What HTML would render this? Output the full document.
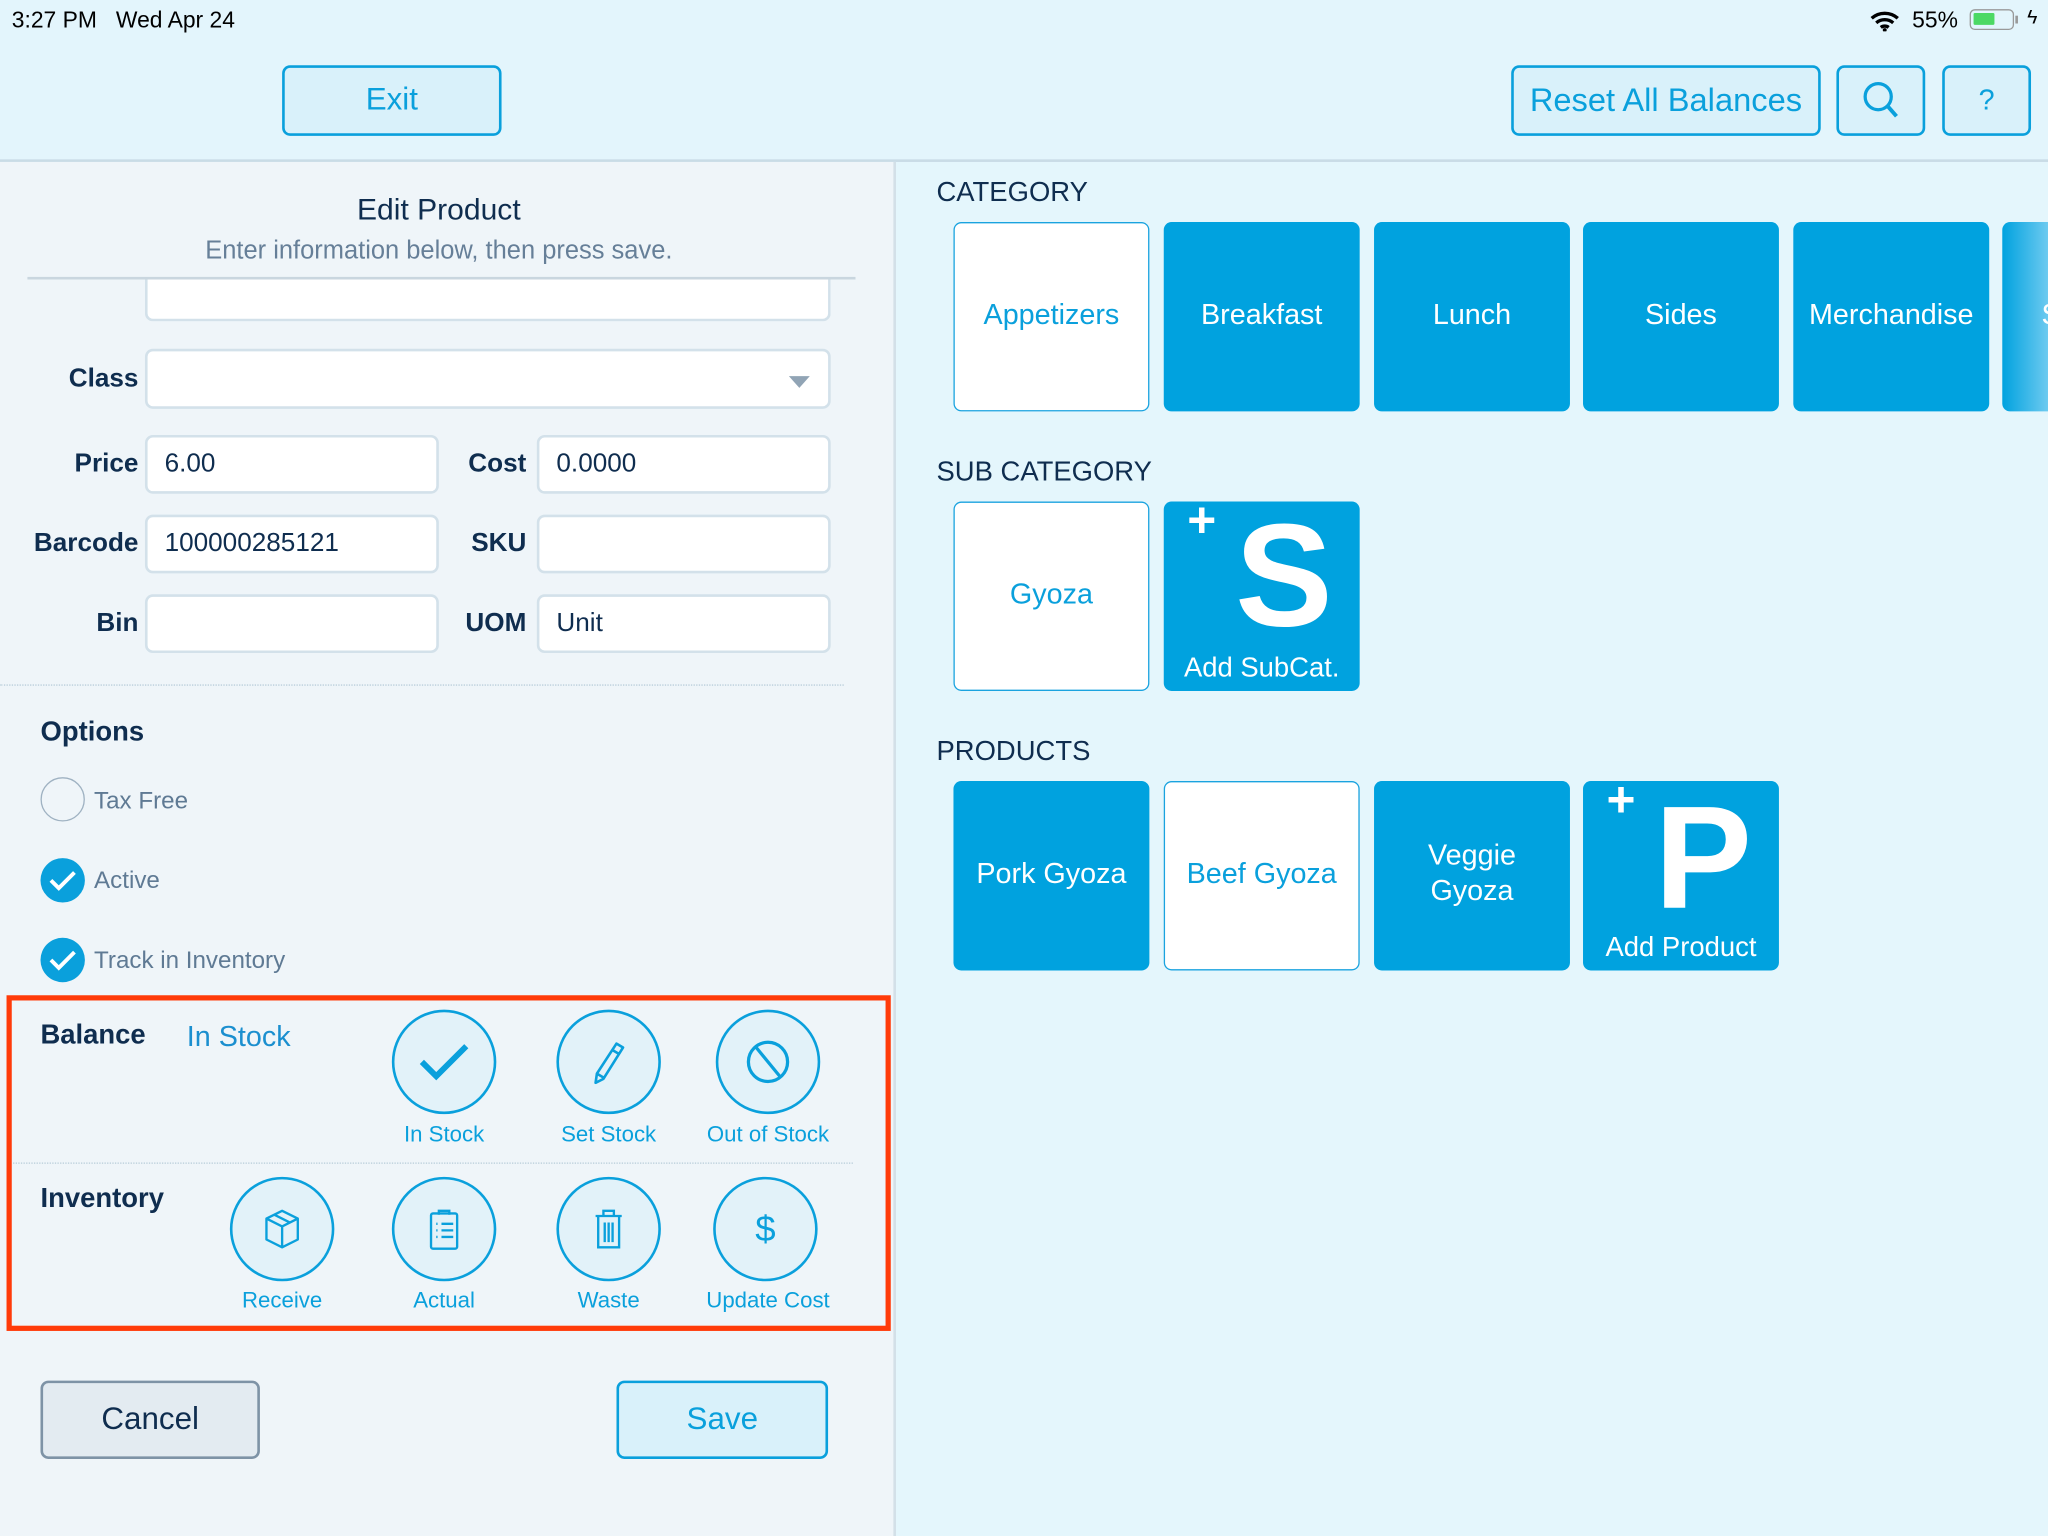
<!DOCTYPE html>
<html><head><meta charset="utf-8"><style>
html,body{margin:0;padding:0;width:2048px;height:1536px;overflow:hidden;background:#e4f6fc}
#w{position:absolute;left:0;top:0;width:1568px;height:1176px;transform:scale(1.306122);transform-origin:0 0;font-family:"Liberation Sans",sans-serif;color:#0f2d4f}
.a{position:absolute}
.btn{position:absolute;border:2px solid #0aa0dc;border-radius:6px;background:#d9f1fa;color:#0aa0dc;display:flex;align-items:center;justify-content:center;box-sizing:border-box}
.inp{position:absolute;background:#fff;border:2px solid #d3e1ea;border-radius:6px;box-sizing:border-box;font-size:20px;padding-left:13px;display:flex;align-items:center;color:#0f2d4f}
.lab{position:absolute;font-weight:bold;font-size:20px;text-align:right;width:100px}
.tile{position:absolute;width:150px;height:145px;border-radius:6px;box-sizing:border-box;display:flex;align-items:center;justify-content:center;text-align:center;font-size:22px;line-height:27px;padding-bottom:5px}
.b{background:#00a2df;color:#fff}
.w{background:#fff;border:1px solid #1aa3df;color:#0aa0dc}
.sec{position:absolute;font-size:21px;color:#0f2d4f}
.circ{position:absolute;width:80px;height:80px;border:2.5px solid #0aa0dc;border-radius:50%;background:#e2f2f9;box-sizing:border-box;display:flex;align-items:center;justify-content:center}
.cl{position:absolute;width:140px;text-align:center;font-size:17px;color:#0aa0dc}
.chk{position:absolute;width:34px;height:34px;border-radius:50%;background:#0aa0dc;display:flex;align-items:center;justify-content:center}
.opt{position:absolute;left:72px;font-size:18.5px;color:#5f7a94}
</style></head><body><div id="w">
<div class="a" style="left:0;top:0;width:1568px;height:122px;background:#e3f5fc;border-bottom:2px solid #c9dce6"></div>
<div class="a" style="left:9px;top:5px;font-size:17.5px;color:#000">3:27 PM&nbsp;&nbsp;&nbsp;Wed Apr 24</div>
<svg class="a" style="left:1431px;top:8px" width="24" height="16" viewBox="0 0 24 16"><path d="M2 6a15 15 0 0 1 20 0M5.5 9.5a10 10 0 0 1 13 0M9 13a5 5 0 0 1 6 0" stroke="#000" stroke-width="2.6" fill="none"/><circle cx="12" cy="15" r="1.5"/></svg>
<div class="a" style="left:1464px;top:5px;font-size:17.5px;color:#000">55%</div>
<div class="a" style="left:1508px;top:7px;width:34px;height:16px;border:1.5px solid #999;border-radius:4px;box-sizing:border-box"><div style="margin:2px;width:16px;height:9px;background:#4cd964;border-radius:1px"></div></div>
<div class="a" style="left:1543px;top:12px;width:2px;height:6px;background:#999"></div>
<div class="a" style="left:1552px;top:5px;font-size:15px;color:#000">ϟ</div>
<div class="btn" style="left:216px;top:50px;width:168px;height:54px;font-size:24px">Exit</div>
<div class="btn" style="left:1157px;top:50px;width:237px;height:54px;font-size:25px">Reset All Balances</div>
<div class="btn" style="left:1406px;top:50px;width:68px;height:54px"><svg width="28" height="30" viewBox="0 0 28 30"><circle cx="12" cy="12" r="10" stroke="#0aa0dc" stroke-width="2.5" fill="none"/><path d="M19 19l7 8" stroke="#0aa0dc" stroke-width="3"/></svg></div>
<div class="btn" style="left:1487px;top:50px;width:68px;height:54px;font-size:22px">?</div>
<div class="a" style="left:0;top:124px;width:684px;height:1052px;background:#eff5f9;border-right:2px solid #d3e0e8"></div>
<div class="a" style="left:0;top:147px;width:672px;text-align:center;font-size:23px">Edit Product</div>
<div class="a" style="left:0;top:181px;width:672px;text-align:center;font-size:19.5px;color:#667f98">Enter information below, then press save.</div>
<div class="a" style="left:21px;top:212px;width:634px;height:2px;background:#c9d6df"></div>
<div class="a" style="left:111px;top:214px;width:525px;height:32px;background:#fff;border:2px solid #d3e1ea;border-top:none;border-radius:0 0 6px 6px;box-sizing:border-box"></div>
<div class="lab" style="left:6px;top:279px">Class</div>
<div class="inp" style="left:111px;top:267px;width:525px;height:46px"><div style="position:absolute;right:14px;top:19px;border-left:8px solid transparent;border-right:8px solid transparent;border-top:9px solid #91a4b5"></div></div>
<div class="lab" style="left:6px;top:344px">Price</div>
<div class="inp" style="left:111px;top:333px;width:225px;height:45px">6.00</div>
<div class="lab" style="left:303px;top:344px">Cost</div>
<div class="inp" style="left:411px;top:333px;width:225px;height:45px">0.0000</div>
<div class="lab" style="left:6px;top:405px">Barcode</div>
<div class="inp" style="left:111px;top:394px;width:225px;height:45px">100000285121</div>
<div class="lab" style="left:303px;top:405px">SKU</div>
<div class="inp" style="left:411px;top:394px;width:225px;height:45px"></div>
<div class="lab" style="left:6px;top:466px">Bin</div>
<div class="inp" style="left:111px;top:455px;width:225px;height:45px"></div>
<div class="lab" style="left:303px;top:466px">UOM</div>
<div class="inp" style="left:411px;top:455px;width:225px;height:45px">Unit</div>
<div class="a" style="left:0;top:524px;width:646px;border-top:1.5px dotted #b6cbd8"></div>
<div class="a" style="left:31px;top:549px;font-size:21px;font-weight:bold">Options</div>
<div class="a" style="left:31px;top:595px;width:34px;height:34px;border:1.5px solid #9fb2c2;border-radius:50%;box-sizing:border-box"></div>
<div class="opt" style="top:602px">Tax Free</div>
<div class="chk" style="left:31px;top:657px"><svg width="22" height="18" viewBox="0 0 22 18"><path d="M2 9l6 6L20 3" stroke="#fff" stroke-width="3" fill="none"/></svg></div>
<div class="opt" style="top:663px">Active</div>
<div class="chk" style="left:31px;top:718px"><svg width="22" height="18" viewBox="0 0 22 18"><path d="M2 9l6 6L20 3" stroke="#fff" stroke-width="3" fill="none"/></svg></div>
<div class="opt" style="top:724px">Track in Inventory</div>
<div class="a" style="left:5px;top:762px;width:677px;height:257px;border:4px solid #ff3b0a;box-sizing:border-box"></div>
<div class="a" style="left:31px;top:781px;font-size:21px;font-weight:bold">Balance</div>
<div class="a" style="left:143px;top:781px;font-size:22px;color:#1b8fcf">In Stock</div>
<div class="circ" style="left:300px;top:773px"><svg width="40" height="30" viewBox="0 0 40 30"><path d="M3 15l11 11L37 3" stroke="#0aa0dc" stroke-width="4.5" fill="none"/></svg></div>
<div class="circ" style="left:426px;top:773px"><svg width="30" height="34" viewBox="0 0 30 34"><path d="M21 3l5 3-15 24-6 3 1-7z M18 8l5 3 M6 26l5 3" stroke="#0aa0dc" stroke-width="2" fill="none" stroke-linejoin="round"/></svg></div>
<div class="circ" style="left:548px;top:773px"><svg width="36" height="36" viewBox="0 0 36 36"><circle cx="18" cy="18" r="15" stroke="#0aa0dc" stroke-width="2.5" fill="none"/><path d="M9 7l18 22" stroke="#0aa0dc" stroke-width="2.5"/></svg></div>
<div class="cl" style="left:270px;top:859px">In Stock</div>
<div class="cl" style="left:396px;top:859px">Set Stock</div>
<div class="cl" style="left:518px;top:859px">Out of Stock</div>
<div class="a" style="left:10px;top:890px;width:643px;border-top:1.5px dotted #b6cbd8"></div>
<div class="a" style="left:31px;top:906px;font-size:21px;font-weight:bold">Inventory</div>
<div class="circ" style="left:176px;top:901px"><svg width="30" height="34" viewBox="0 0 30 34"><path d="M3 9l12-6 12 6v16l-12 6-12-6z M3 9l12 6 12-6 M15 15v16 M9 6l12 6" stroke="#0aa0dc" stroke-width="1.8" fill="none" stroke-linejoin="round"/></svg></div>
<div class="circ" style="left:300px;top:901px"><svg width="26" height="36" viewBox="0 0 26 36"><rect x="3" y="6" width="20" height="27" rx="1.5" stroke="#0aa0dc" stroke-width="1.8" fill="none"/><path d="M9 7V4h8v3 M7 14h1 M11 14h9 M7 19h1 M11 19h9 M7 24h1 M11 24h9" stroke="#0aa0dc" stroke-width="1.8" fill="none"/></svg></div>
<div class="circ" style="left:426px;top:901px"><svg width="26" height="36" viewBox="0 0 26 36"><path d="M3 8h20 M9 8V4h8v4 M5 8v24h16V8 M10 13v15 M13 13v15 M16 13v15" stroke="#0aa0dc" stroke-width="1.8" fill="none"/></svg></div>
<div class="circ" style="left:546px;top:901px;font-size:28px;color:#0aa0dc">$</div>
<div class="cl" style="left:146px;top:986px">Receive</div>
<div class="cl" style="left:270px;top:986px">Actual</div>
<div class="cl" style="left:396px;top:986px">Waste</div>
<div class="cl" style="left:518px;top:986px">Update Cost</div>
<div class="btn" style="left:31px;top:1057px;width:168px;height:60px;font-size:24px;background:#e3ebf1;border-color:#7e93a6;color:#0f2d4f">Cancel</div>
<div class="btn" style="left:472px;top:1057px;width:162px;height:60px;font-size:24px">Save</div>
<div class="sec" style="left:717px;top:136px">CATEGORY</div>
<div class="tile w" style="left:730px;top:170px">Appetizers</div>
<div class="tile b" style="left:891px;top:170px">Breakfast</div>
<div class="tile b" style="left:1052px;top:170px">Lunch</div>
<div class="tile b" style="left:1212px;top:170px">Sides</div>
<div class="tile b" style="left:1373px;top:170px">Merchandise</div>
<div class="tile" style="left:1533px;top:170px;width:35px;border-radius:6px 0 0 6px;background:linear-gradient(90deg,#00a2df,#6dcaf0);color:#fff;justify-content:flex-start;padding-left:30px;overflow:hidden">S</div>
<div class="sec" style="left:717px;top:350px">SUB CATEGORY</div>
<div class="tile w" style="left:730px;top:384px">Gyoza</div>
<div class="tile b" style="left:891px;top:384px;display:block">
 <div style="position:absolute;left:18px;top:2px;font-size:38px;font-weight:bold">+</div>
 <div style="position:absolute;left:0;width:150px;top:-2px;font-size:112px;line-height:118px;font-weight:bold;padding-left:34px;box-sizing:border-box;text-align:center">S</div>
 <div style="position:absolute;left:0;width:150px;top:114px;font-size:21px">Add SubCat.</div>
</div>
<div class="sec" style="left:717px;top:564px">PRODUCTS</div>
<div class="tile b" style="left:730px;top:598px">Pork Gyoza</div>
<div class="tile w" style="left:891px;top:598px">Beef Gyoza</div>
<div class="tile b" style="left:1052px;top:598px">Veggie<br>Gyoza</div>
<div class="tile b" style="left:1212px;top:598px;display:block">
 <div style="position:absolute;left:18px;top:2px;font-size:38px;font-weight:bold">+</div>
 <div style="position:absolute;left:0;width:150px;top:0;font-size:112px;line-height:118px;font-weight:bold;padding-left:34px;box-sizing:border-box;text-align:center">P</div>
 <div style="position:absolute;left:0;width:150px;top:114px;font-size:21px">Add Product</div>
</div>
</div></body></html>
